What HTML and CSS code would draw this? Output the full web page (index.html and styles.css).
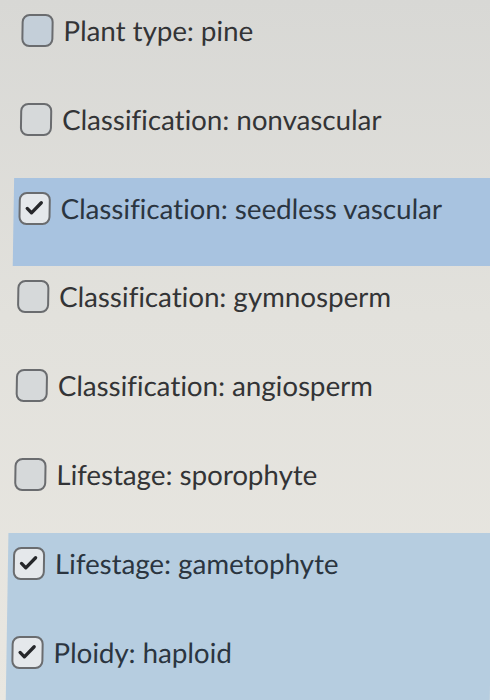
FILE: index.html
```html
<!DOCTYPE html>
<html>
<head>
<meta charset="utf-8">
<link rel="stylesheet" href="styles.css">
</head>
<body>
<div class="page">
  <ul class="list">
    <li class="row">
      <span class="box box-blue"></span>
      <span class="label">Plant type: pine</span>
    </li>
    <li class="row">
      <span class="box"></span>
      <span class="label">Classification: nonvascular</span>
    </li>
    <li class="row selected">
      <span class="box checked"><svg viewBox="0 0 32 32" width="30" height="30"><polyline points="7.5,16.5 12.5,21.5 23.5,10" fill="none" stroke="#26272a" stroke-width="3.8" stroke-linecap="round" stroke-linejoin="round"/></svg></span>
      <span class="label">Classification: seedless vascular</span>
    </li>
    <li class="row">
      <span class="box"></span>
      <span class="label">Classification: gymnosperm</span>
    </li>
    <li class="row">
      <span class="box"></span>
      <span class="label">Classification: angiosperm</span>
    </li>
    <li class="row">
      <span class="box"></span>
      <span class="label">Lifestage: sporophyte</span>
    </li>
    <li class="row selected2">
      <span class="box checked"><svg viewBox="0 0 32 32" width="30" height="30"><polyline points="7.5,16.5 12.5,21.5 23.5,10" fill="none" stroke="#26272a" stroke-width="3.8" stroke-linecap="round" stroke-linejoin="round"/></svg></span>
      <span class="label">Lifestage: gametophyte</span>
    </li>
    <li class="row selected2 last">
      <span class="box checked"><svg viewBox="0 0 32 32" width="30" height="30"><polyline points="7.5,16.5 12.5,21.5 23.5,10" fill="none" stroke="#26272a" stroke-width="3.8" stroke-linecap="round" stroke-linejoin="round"/></svg></span>
      <span class="label">Ploidy: haploid</span>
    </li>
  </ul>
</div>
</body>
</html>
```
FILE: styles.css
```css
html, body {
  margin: 0;
  padding: 0;
  height: 100%;
  overflow: hidden;
}
body {
  background: linear-gradient(to bottom, #d8d8d5 0%, #e2e1dc 45%, #e9e7e1 100%);
  font-family: Lato, "Open Sans", sans-serif;
}
.page {
  transform: skewX(-0.92deg);
  transform-origin: 0 0;
  width: 501px;
}
.list {
  list-style: none;
  margin: 0;
  padding: 0 0 0 17px;
}
.row {
  display: flex;
  align-items: flex-start;
  gap: 10px;
  height: 88.8px;
  box-sizing: border-box;
  padding: 14px 0 0 5px;
}
.row.selected {
  background: #a8c3e0;
}
.row.selected2 {
  background: #b6cde0;
}
.row.last {
  height: 78px;
}
.box {
  width: 32px;
  height: 33px;
  box-sizing: border-box;
  border: 2.5px solid #6a6c6f;
  border-radius: 8px;
  background: #d6d9da;
  flex: none;
  display: flex;
  align-items: center;
  justify-content: center;
}
.box-blue {
  background: #c4cfd9;
}
.box.checked {
  background: #e5e8eb;
}
.label {
  font-size: 27.7px;
  line-height: 36px;
  margin-top: -1px;
  color: #333436;
  white-space: nowrap;
  font-variant-ligatures: none;
}
.selected .label, .selected2 .label {
  color: #2b3540;
}
```
